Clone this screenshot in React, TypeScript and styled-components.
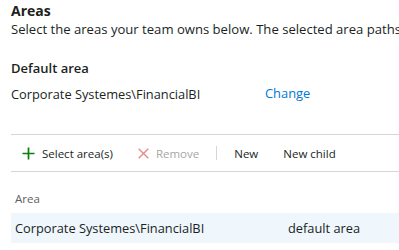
import React from 'react'
import styled, {createGlobalStyle} from 'styled-components'

const GlobalStyle = createGlobalStyle`
    html, body {
        margin: 0;
        padding: 0;
        background: #ffffff;
        overflow: hidden;
    }
    body {
        font-family: "Open Sans", "Noto Sans", sans-serif;
        color: #201f1e;
    }
`

type Row = {
    path: string
    note: string
}

const rows: Row[] = [
    {path: 'Corporate Systemes\\FinancialBI', note: 'default area'},
]

const PlusIcon = () => (
    <svg width="13" height="13" viewBox="0 0 13 13">
        <path d="M6.5 0.5v12M0.5 6.5h12" stroke="#107c10" strokeWidth="1.7" />
    </svg>
)

const CrossIcon = () => (
    <svg width="11" height="11" viewBox="0 0 11 11">
        <path d="M0.7 0.7l9.6 9.6M10.3 0.7l-9.6 9.6" stroke="#e8898b" strokeWidth="1.4" />
    </svg>
)

export default function App() {
    return (
        <Page>
            <GlobalStyle />

            <Title>Areas</Title>
            <Subtitle>Select the areas your team owns below. The selected area paths</Subtitle>

            <SectionLabel>Default area</SectionLabel>
            <DefaultRow>
                <Value>Corporate Systemes\FinancialBI</Value>
                <Link>Change</Link>
            </DefaultRow>

            <Toolbar>
                <ToolButton>
                    <PlusIcon />
                    <span>Select area(s)</span>
                </ToolButton>
                <ToolButton disabled>
                    <CrossIcon />
                    <span>Remove</span>
                </ToolButton>
                <Divider />
                <ToolButton>New</ToolButton>
                <ToolButton>New child</ToolButton>
            </Toolbar>

            <Table>
                <HeaderCell>Area</HeaderCell>
                {rows.map((row, idx) => (
                    <TableRow key={idx} $selected={idx === 0}>
                        <PathCell>{row.path}</PathCell>
                        <NoteCell>{row.note}</NoteCell>
                    </TableRow>
                ))}
            </Table>
        </Page>
    )
}

const Page = styled.div`
    width: 399px;
    height: 250px;
    padding-left: 11px;
    box-sizing: border-box;
    overflow: hidden;
`

const Title = styled.div`
    font-size: 14px;
    font-weight: 700;
    line-height: 18px;
    padding-top: 2px;
    white-space: nowrap;
`

const Subtitle = styled.div`
    font-size: 13.1px;
    line-height: 18px;
    white-space: nowrap;
`

const SectionLabel = styled.div`
    font-size: 13px;
    font-weight: 600;
    line-height: 18px;
    margin-top: 21px;
`

const DefaultRow = styled.div`
    display: flex;
    align-items: center;
    margin-top: 8px;
    height: 18px;
`

const Value = styled.div`
    font-size: 12.8px;
    width: 254px;
    white-space: nowrap;
`

const Link = styled.div`
    font-size: 12.9px;
    color: #0078d4;
    margin-top: -3px;
`

const Toolbar = styled.div`
    display: flex;
    align-items: center;
    height: 36px;
    margin-top: 31px;
    border-top: 1px solid #d6d6d6;
    border-bottom: 1px solid #d6d6d6;
    padding-left: 11px;
`

const ToolButton = styled.div<{disabled?: boolean}>`
    display: flex;
    align-items: center;
    gap: 7px;
    font-size: 11.5px;
    margin-right: 25px;
    color: ${props => (props.disabled ? '#a6a6a6' : '#201f1e')};
    white-space: nowrap;
`

const Divider = styled.div`
    width: 1px;
    height: 14px;
    background: #d6d6d6;
    margin-left: -8px;
    margin-right: 17px;
`

const Table = styled.div`
    margin-top: 19px;
`

const HeaderCell = styled.div`
    font-size: 11.5px;
    color: #605e5c;
    padding-left: 4px;
    line-height: 16px;
    height: 22px;
`

const TableRow = styled.div<{$selected: boolean}>`
    display: flex;
    align-items: center;
    height: 30px;
    padding-left: 4px;
    background: ${props => (props.$selected ? '#eff6fc' : 'transparent')};
`

const PathCell = styled.div`
    font-size: 12.8px;
    width: 273px;
    white-space: nowrap;
`

const NoteCell = styled.div`
    font-size: 12.8px;
    white-space: nowrap;
`
